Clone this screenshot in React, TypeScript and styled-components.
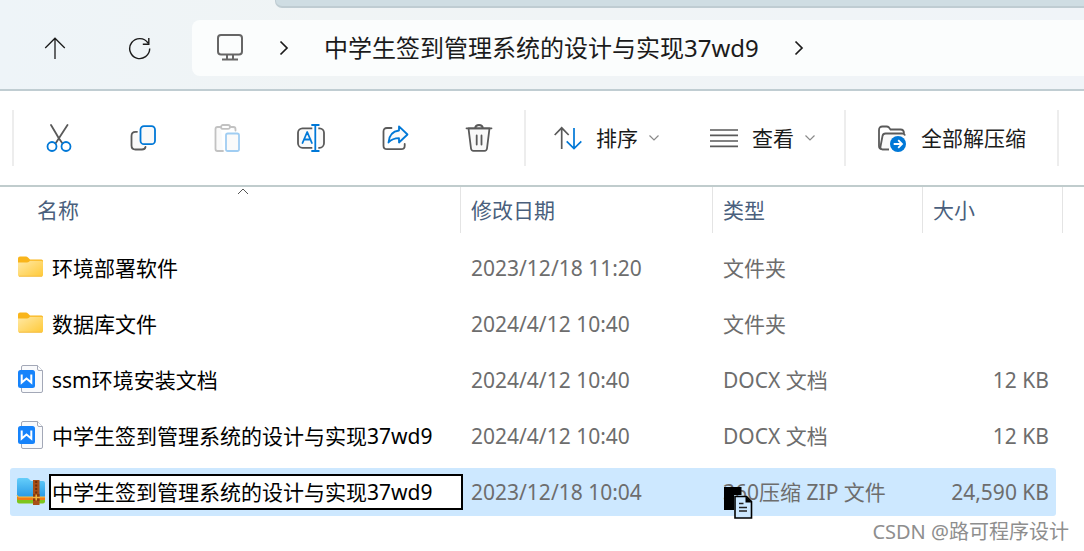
import React from "react";
import styled, { createGlobalStyle, css } from "styled-components";

const GlobalStyle = createGlobalStyle`
  * { box-sizing: border-box; }
  body {
    margin: 0;
    background: #ffffff;
    font-family: "Noto Sans", "Noto Sans CJK SC", sans-serif;
    font-size: 21px;
    line-height: 28px;
    color: #1b1b1b;
  }
  button, input { font: inherit; color: inherit; }
`;

const Window = styled.main`
  display: flex;
  flex-direction: column;
  overflow: hidden;
`;

const Header = styled.header`
  background: linear-gradient(90deg, #eef4f8, #f0f4f5 30%, #f0f4f8);
  border-bottom: 2px solid #c0cdd2;
`;

const TabEdge = styled.div`
  height: 8px;
  margin-left: 275px;
  background: #cfdde3;
  border-bottom: 2px solid #bfccd2;
  border-left: 1px solid #bfccd2;
  border-bottom-left-radius: 7px;
`;

const NavRow = styled.nav`
  display: flex;
  align-items: center;
  padding: 12px 0 13px 13px;
`;

const IconButton = styled.button`
  display: flex;
  align-items: center;
  justify-content: center;
  width: 84px;
  height: 56px;
  padding: 0;
  border: 0;
  background: transparent;
`;

const AddressBar = styled.div`
  flex: 1;
  display: flex;
  align-items: center;
  height: 56px;
  margin-left: 11px;
  padding-left: 24px;
  background: #fbfdfd;
  border-radius: 8px 0 0 8px;
`;

const Crumb = styled.button`
  display: flex;
  align-items: center;
  padding: 0;
  border: 0;
  background: transparent;
  font-size: 24px;
  line-height: 32px;
  white-space: nowrap;
`;

const CrumbArrow = styled.span`
  display: flex;
  justify-content: center;
  width: 80px;
`;

const Toolbar = styled.div`
  display: flex;
  align-items: center;
  height: 96px;
  padding-left: 9px;
  border-bottom: 2px solid #c0cccd;
`;

const Divider = styled.span`
  flex: none;
  width: 2px;
  height: 56px;
  margin: 0 3px;
  background: #ededed;
`;

const TextButton = styled.button<{ $wide?: boolean }>`
  display: flex;
  align-items: center;
  height: 56px;
  padding: 0 ${(p) => (p.$wide ? 28 : 25)}px;
  border: 0;
  background: transparent;
  white-space: nowrap;
`;

const ButtonLabel = styled.span`
  margin-left: 14px;
`;

const MenuArrow = styled.svg`
  margin-left: 10px;
`;

const FileTable = styled.table`
  width: calc(100% - 21px);
  table-layout: fixed;
  border-collapse: collapse;
`;

const Column = styled.col<{ $width?: number }>`
  ${(p) => p.$width && css`width: ${p.$width}px;`}
`;

const HeadCell = styled.th`
  padding: 0 0 7px;
  font-weight: 400;
  text-align: left;
  color: #4a5f7d;
`;

const HeadLabel = styled.div<{ $first?: boolean }>`
  position: relative;
  height: 46px;
  padding: 9px 0 0 ${(p) => (p.$first ? 37 : 10)}px;
  border-right: 1px solid #e4e4e4;
`;

const SortMark = styled.svg`
  position: absolute;
  top: 0;
  left: 50%;
  margin-left: 6px;
`;

const Cell = styled.td`
  padding: 4px 0;
`;

const CellBody = styled.div<{ $selected?: boolean; $edge?: "start" | "end" }>`
  position: relative;
  display: flex;
  align-items: center;
  height: 48px;
  padding-left: 10px;
  color: #6d6d6d;
  white-space: nowrap;
  background: ${(p) => (p.$selected ? "#cde8ff" : "transparent")};
  ${(p) => p.$edge === "start" && css`
    margin-left: 10px;
    padding-left: 6px;
    color: #000000;
    border-radius: 3px 0 0 3px;
  `}
  ${(p) => p.$edge === "end" && css`
    justify-content: flex-end;
    margin-right: 7px;
    padding-right: 7px;
    border-radius: 0 3px 3px 0;
  `}
`;

const FileIcon = styled.svg`
  flex: none;
  margin-right: 3px;
`;

const FileName = styled.span`
  padding-left: 3px;
`;

const NameInput = styled.input`
  position: relative;
  z-index: 1;
  flex: 1;
  min-width: 0;
  height: 36px;
  margin-right: -2px;
  padding: 0 1px 2px;
  border: 2px solid #000000;
  border-radius: 0;
  background: #ffffff;
  outline: none;
`;

const DragCursor = styled.svg`
  position: absolute;
  left: 11px;
  top: 18px;
`;

const Watermark = styled.footer`
  padding-right: 15px;
  font-size: 20px;
  line-height: 24px;
  text-align: right;
  color: #8e8e8e;
`;

const GRAY = "#5a5a5a";
const BLUE = "#0078d7";

type ToolProps = { label: string; children: React.ReactNode };

const Tool = ({ label, children }: ToolProps) => (
  <IconButton type="button" aria-label={label}>
    <svg width="28" height="28" viewBox="0 0 28 28" fill="none" stroke={GRAY} strokeWidth="1.800" strokeLinecap="round" strokeLinejoin="round">
      {children}
    </svg>
  </IconButton>
);

const Chevron = () => (
  <svg width="10" height="16" viewBox="0 0 10 16" fill="none" stroke="#1b1b1b" strokeWidth="1.7">
    <path d="M1.5 1.5 8 8l-6.500 6.500" />
  </svg>
);

const DownArrow = () => (
  <MenuArrow width="12" height="8" viewBox="0 0 12 8" fill="none" stroke="#8a8a8a" strokeWidth="1.2">
    <path d="M1.500 1.500 6 6l4.500-4.500" />
  </MenuArrow>
);

const FolderIcon = () => (
  <FileIcon width="30" height="28" viewBox="0 0 30 28">
    <defs>
      <linearGradient id="folder" x1="0" y1="0" x2="1" y2="1">
        <stop offset="0" stopColor="#ffe9a6" />
        <stop offset="1" stopColor="#ffc937" />
      </linearGradient>
    </defs>
    <path d="M2 4.500Q2 2.500 4 2.500h6q1 0 2 1l2 2h11.500q1.500 0 1.500 1.500v6H2z" fill="#f9b51b" />
    <path d="M2 8.500h9q1.200 0 2-.8l1-1h11.500q1.500 0 1.500 1.500V21q0 1.500-1.500 1.500h-22Q2 22.500 2 21z" fill="url(#folder)" />
    <path d="M3 22.200h23" stroke="#f4bd45" />
  </FileIcon>
);

const DocIcon = () => (
  <FileIcon width="30" height="30" viewBox="0 0 30 30">
    <path d="M7 .5h14.500l5 5V26q0 1.500-1.500 1.500H7Q5.500 27.500 5.500 26V2Q5.500 .5 7 .5z" fill="#f9fafc" stroke="#a3a8b7" />
    <path d="M21.500 .5v3.500q0 1.500 1.500 1.500h3.500" fill="#fff" stroke="#a3a8b7" />
    <rect x="2" y="5" width="17" height="18" rx="2.500" fill="#1683fb" />
    <path d="M5.700 9.500v8l4.800-4 4.800 4v-8" fill="none" stroke="#fff" strokeWidth="2" />
  </FileIcon>
);

const ZipIcon = () => (
  <FileIcon width="30" height="30" viewBox="0 0 30 30">
    <defs>
      <linearGradient id="zip" x1="0" y1="0" x2="0" y2="1">
        <stop offset="0" stopColor="#65cefa" />
        <stop offset="1" stopColor="#299ae6" />
      </linearGradient>
    </defs>
    <path d="M1 21h28v3.500q0 2-2 2H3q-2 0-2-2z" fill="#7ec51d" />
    <path d="M1 18h28v5H3q-2 0-2-2z" fill="#f27b16" />
    <path d="M1 3q0-2 2-2h8q1 0 2 1l2 2h12q2 0 2 2v14H3q-2 0-2-2z" fill="url(#zip)" />
    <path d="M1 18q0 2 2 2h26" fill="none" stroke="#ffc543" />
    <rect x="17" y="3" width="6.500" height="25" fill="#a84f18" />
    <path d="M20.200 4v13" stroke="#6f2f0b" strokeWidth="2" strokeDasharray="2 1.500" />
    <path d="M17 17h6.500v7H17z" fill="#8b3c0f" />
    <path d="M16.500 20.500h7.500M20.200 17.500v6" stroke="#f4b63e" strokeWidth="1.500" />
  </FileIcon>
);

const icons = { folder: FolderIcon, doc: DocIcon, zip: ZipIcon };

type Entry = {
  icon: keyof typeof icons;
  name: string;
  date: string;
  type: string;
  size: string;
  renaming?: boolean;
};

const entries: Entry[] = [
  { icon: "folder", name: "环境部署软件", date: "2023/12/18 11:20", type: "文件夹", size: "" },
  { icon: "folder", name: "数据库文件", date: "2024/4/12 10:40", type: "文件夹", size: "" },
  { icon: "doc", name: "ssm环境安装文档", date: "2024/4/12 10:40", type: "DOCX 文档", size: "12 KB" },
  { icon: "doc", name: "中学生签到管理系统的设计与实现37wd9", date: "2024/4/12 10:40", type: "DOCX 文档", size: "12 KB" },
  { icon: "zip", name: "中学生签到管理系统的设计与实现37wd9", date: "2023/12/18 10:04", type: "360压缩 ZIP 文件", size: "24,590 KB", renaming: true },
];

const FileRow = ({ entry }: { entry: Entry }) => {
  const Icon = icons[entry.icon];
  const selected = entry.renaming;
  return (
    <tr>
      <Cell>
        <CellBody $selected={selected} $edge="start">
          <Icon />
          {entry.renaming ? (
            <NameInput aria-label="名称" defaultValue={entry.name} />
          ) : (
            <FileName>{entry.name}</FileName>
          )}
        </CellBody>
      </Cell>
      <Cell><CellBody $selected={selected}>{entry.date}</CellBody></Cell>
      <Cell>
        <CellBody $selected={selected}>
          {entry.type}
          {selected && (
            <DragCursor width="29" height="34" viewBox="0 0 29 34">
              <path d="M0 1h17.500v8H10v15H0z" fill="#000" />
              <path d="M11 10.500h11.500l5 5V32H11z" fill="#cde8ff" stroke="#000" strokeWidth="1.600" />
              <path d="M21.500 10v6.500H28z" fill="#000" />
              <path d="M15 17.500h4.500M15 21.500h8M15 25h8" stroke="#222" strokeWidth="1.700" />
            </DragCursor>
          )}
        </CellBody>
      </Cell>
      <Cell><CellBody $selected={selected} $edge="end">{entry.size}</CellBody></Cell>
    </tr>
  );
};

export default function App() {
  return (
    <Window>
      <GlobalStyle />
      <Header>
        <TabEdge />
        <NavRow>
          <IconButton type="button" aria-label="向上">
            <svg width="22" height="22" viewBox="0 0 22 22" fill="none" stroke="#1b1b1b" strokeWidth="1.300">
              <path d="M11 22V1M1.200 11 11 1.200 20.800 11" />
            </svg>
          </IconButton>
          <IconButton type="button" aria-label="刷新">
            <svg width="24" height="24" viewBox="0 0 24 24" fill="none" stroke="#1b1b1b" strokeWidth="1.400">
              <path d="M22.700 12.500A10 10 0 1 1 21 7M21.800 2v6.300h-6" />
            </svg>
          </IconButton>
          <AddressBar>
            <Crumb type="button" aria-label="此电脑">
              <svg width="28" height="28" viewBox="0 0 28 28" fill="none" stroke="#666" strokeWidth="2">
                <rect x="2" y="1" width="24" height="19.500" rx="3" />
                <path d="M11 20.500v5M17 20.500v5M6 25.500h16" />
              </svg>
            </Crumb>
            <CrumbArrow><Chevron /></CrumbArrow>
            <Crumb type="button">中学生签到管理系统的设计与实现37wd9</Crumb>
            <CrumbArrow><Chevron /></CrumbArrow>
          </AddressBar>
        </NavRow>
      </Header>

      <Toolbar role="toolbar" aria-label="命令栏">
        <Divider />
        <Tool label="剪切">
          <path d="M6 1l5.500 9.200M13.500 13.800l4 5.700M22.500 1 10.500 19.500M11.500 10.200l2 3.600" />
          <g stroke={BLUE}>
            <circle cx="7" cy="22.500" r="4.500" />
            <circle cx="21" cy="22.500" r="4.500" />
          </g>
        </Tool>
        <Tool label="复制">
          <path d="M8 7.800H6.500Q2.500 7.800 2.500 12v9.500q0 4 4 4H13q3 0 3.500-2.500" fill="#f9f9f9" />
          <rect x="11.500" y="2.200" width="14.500" height="18" rx="3.500" fill="#f9f9f9" stroke={BLUE} />
        </Tool>
        <Tool label="粘贴">
          <g stroke="#c2c2c2">
            <path d="M8 3H4.500Q2.500 3 2.500 5v20q0 2 2 2H10M17 3h3.500q2 0 2 2v1.500" fill="#fafafa" />
            <rect x="8" y="1" width="9" height="3.800" rx="1.900" fill="#fff" />
          </g>
          <rect x="13" y="9.500" width="13" height="17.500" rx="1.800" fill="#fafafa" stroke="#a0cdf2" />
        </Tool>
        <Tool label="重命名">
          <rect x="1" y="4.300" width="26" height="19.500" rx="4.500" fill="#f9f9f9" />
          <path d="M18.300 3v22" stroke="#fff" strokeWidth="6" strokeLinecap="butt" />
          <path d="M18.300 1v26M15 1h6.800M15 27h6.800M5.500 19l4.700-11 4.700 11M7 15.500h6.500" stroke={BLUE} />
        </Tool>
        <Tool label="共享">
          <path d="M10.500 4H6Q2.500 4 2.500 7.500v14.200q0 3.500 3.500 3.500h14.200q3.500 0 3.500-3.500V20" />
          <path d="M18 2.300 26.500 10.500 18 18.500V14.200q-6.500 0-10.500 4.300.8-10.800 10.500-12z" fill="#f9f9f9" stroke={BLUE} />
        </Tool>
        <Tool label="删除">
          <path d="M3.500 4.300 6 24.500q.3 2.300 2.500 2.300h11q2.200 0 2.500-2.300L24.500 4.300z" fill="#f9f9f9" />
          <path d="M1.500 4.300h25M10 4.300q.5-3.300 4-3.300t4 3.300M11.700 11.500v9M16.500 11.500v9" />
        </Tool>
        <Divider />
        <TextButton type="button">
          <svg width="28" height="28" viewBox="0 0 28 28" fill="none" strokeWidth="1.700">
            <path d="M7.700 25V4M.700 11 7.700 3.800l7 7.200" stroke={GRAY} />
            <path d="M20 4v20.500M12.700 17.300 20 24.500l7.300-7.200" stroke={BLUE} />
          </svg>
          <ButtonLabel>排序</ButtonLabel>
          <DownArrow />
        </TextButton>
        <TextButton type="button">
          <svg width="28" height="28" viewBox="0 0 28 28" stroke={GRAY} strokeWidth="1.700">
            <path d="M0 6h28M0 11.300h28M0 17h28M0 22.300h28" />
          </svg>
          <ButtonLabel>查看</ButtonLabel>
          <DownArrow />
        </TextButton>
        <Divider />
        <TextButton type="button" $wide>
          <svg width="30" height="28" viewBox="0 0 30 28" fill="none" stroke={GRAY} strokeWidth="1.800">
            <path d="M12 25.300H5Q2 25.300 2 22V6q0-3.500 3.500-3.500h4q1.500 0 2.500 1L13.500 5.500h10q3.500 0 3.500 4" />
            <path d="M12 25.300H5.500Q3 25.300 3.500 22.500L5.500 12q.5-2.500 3-2.500h17q2 0 2.500 2" fill="#f9f9f9" />
            <circle cx="21" cy="20" r="8" fill={BLUE} stroke="none" />
            <path d="M16.700 20h8M21.200 16.200l3.800 3.800-3.800 3.800" stroke="#fff" />
          </svg>
          <ButtonLabel>全部解压缩</ButtonLabel>
        </TextButton>
        <Divider />
      </Toolbar>

      <FileTable>
        <colgroup>
          <Column />
          <Column $width={252} />
          <Column $width={210} />
          <Column $width={140} />
        </colgroup>
        <thead>
          <tr>
            <HeadCell scope="col">
              <HeadLabel $first>
                名称
                <SortMark width="14" height="8" viewBox="0 0 14 8" fill="none" stroke="#555">
                  <path d="M2 7l5-5 5 5" />
                </SortMark>
              </HeadLabel>
            </HeadCell>
            <HeadCell scope="col"><HeadLabel>修改日期</HeadLabel></HeadCell>
            <HeadCell scope="col"><HeadLabel>类型</HeadLabel></HeadCell>
            <HeadCell scope="col"><HeadLabel>大小</HeadLabel></HeadCell>
          </tr>
        </thead>
        <tbody>
          {entries.map((entry, i) => (
            <FileRow key={i} entry={entry} />
          ))}
        </tbody>
      </FileTable>
      <Watermark>CSDN @路可程序设计</Watermark>
    </Window>
  );
}
